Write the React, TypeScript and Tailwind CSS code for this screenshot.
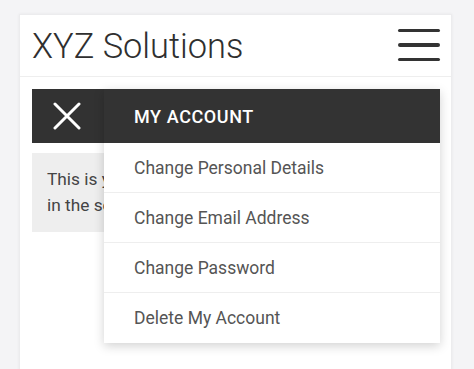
import React from "react";

export default function App() {
  const items = [
    "Change Personal Details",
    "Change Email Address",
    "Change Password",
    "Delete My Account",
  ];
  return (
    <div
      className="w-[474px] h-[369px] overflow-hidden bg-[#f4f4f6] pt-[14px] pl-[19px]"
      style={{ fontFamily: "Roboto, 'Liberation Sans', sans-serif" }}
    >
      <div className="w-[433px] h-[400px] bg-white border border-[#ececee] shadow-[0_0_3px_rgba(0,0,0,0.06)]">
        <div className="h-[62px] flex items-center justify-between pl-[12px] pr-[11px] border-b border-[#eeeeee]">
          <div className="text-[34.4px] font-light text-[#2f2f2f] leading-none mt-[1px]">
            XYZ Solutions
          </div>
          <div className="flex flex-col gap-[11px] w-[42px] mt-[-1px]">
            <span className="block h-[3.5px] rounded-full bg-[#333333]" />
            <span className="block h-[3.5px] rounded-full bg-[#333333]" />
            <span className="block h-[3.5px] rounded-full bg-[#333333]" />
          </div>
        </div>
        <div className="relative px-[12px] pt-[12px]">
          <div className="h-[54px] bg-[#323232] flex items-center pl-[21px]">
            <svg width="28" height="28" viewBox="0 0 28 28">
              <path
                d="M2 2 L26 26 M26 2 L2 26"
                stroke="white"
                strokeWidth="3"
                strokeLinecap="round"
              />
            </svg>
          </div>
          <div className="mt-[10px] h-[79px] bg-[#eeeeee] pl-[15px] pt-[13px] text-[17.3px] leading-[26px] text-[#444444]">
            <div>This is your account area. You can make changes</div>
            <div>in the settings menu above.</div>
          </div>
          <div className="absolute left-[84px] top-[12px] w-[336px] bg-white shadow-[0_3px_10px_rgba(0,0,0,0.18)]">
            <div className="h-[54px] bg-[#333333] flex items-center pl-[30px] text-[18px] font-medium text-white tracking-[0.6px]">
              MY ACCOUNT
            </div>
            {items.map((t, i) => (
              <div
                key={t}
                className={
                  "h-[50px] flex items-center pl-[30px] pt-[1px] text-[17.5px] text-[#555555] " +
                  (i < items.length - 1 ? "border-b border-[#eeeeee]" : "")
                }
              >
                {t}
              </div>
            ))}
          </div>
        </div>
      </div>
    </div>
  );
}
